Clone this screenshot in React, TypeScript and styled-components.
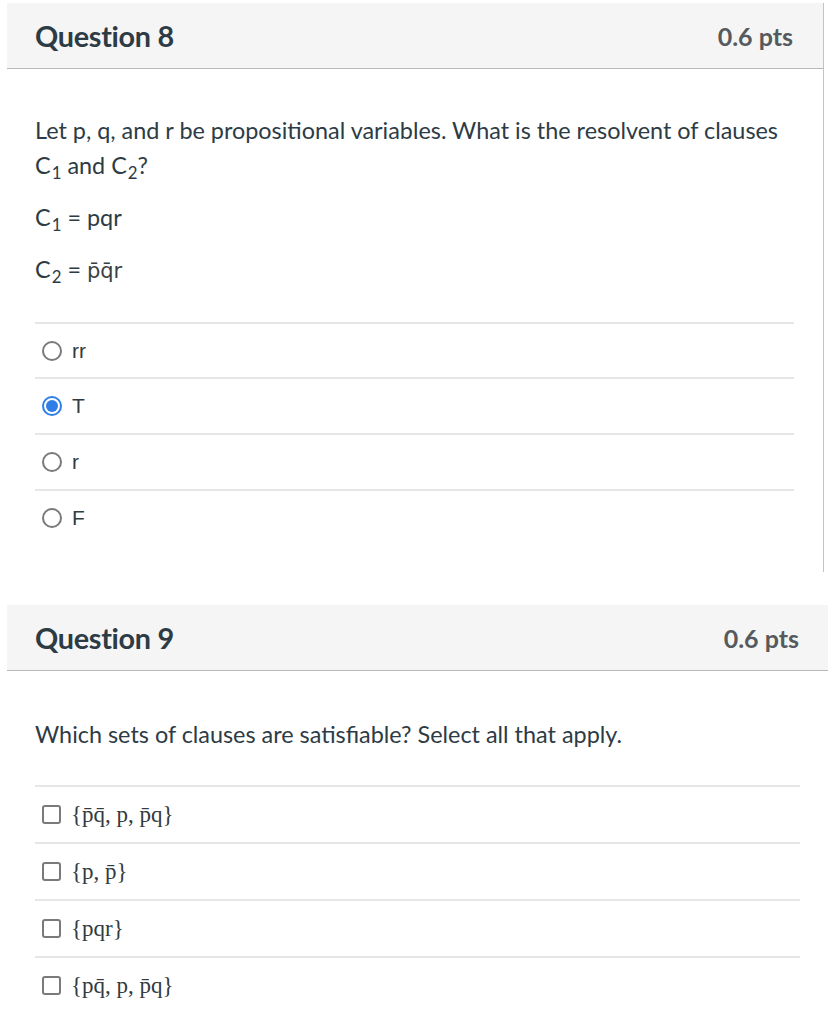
import React from 'react'
import styled, { createGlobalStyle } from 'styled-components'

const GlobalStyle = createGlobalStyle`
    body {
        margin: 0;
        background: #fff;
        font-family: Lato, 'Noto Sans', sans-serif;
        color: #2d3b45;
    }
`

const Page = styled.div`
    padding: 3px 0 0 7px;
    width: 837px;
    box-sizing: border-box;
`

const Card = styled.section<{ width: number; edge: boolean; gap?: number }>`
    width: ${(p) => p.width}px;
    box-sizing: border-box;
    border-right: ${(p) => (p.edge ? '1px solid #c4c4c4' : 'none')};
    margin-bottom: ${(p) => p.gap ?? 0}px;
`

const Header = styled.header<{ right: number }>`
    display: flex;
    align-items: center;
    justify-content: space-between;
    height: 65px;
    padding: 0 ${(p) => p.right}px 0 28px;
    background: #f5f5f5;
    border-bottom: 1px solid #b8b8b8;
`

const Title = styled.h2`
    margin: 0;
    font-size: 28.8px;
    font-weight: 700;
    color: #2d3b45;
    letter-spacing: -0.3px;
`

const Points = styled.div`
    font-size: 25px;
    font-weight: 700;
    color: #555a5e;
`

const Body = styled.div<{ top: number; right: number; bottom: number }>`
    padding: ${(p) => p.top}px ${(p) => p.right}px ${(p) => p.bottom}px 28px;
`

const Text = styled.p`
    margin: 0 0 17px;
    font-size: 23.4px;
    line-height: 35px;
    color: #2d3b45;
`

const Clause = styled.span`
    white-space: nowrap;
`

const Sub = styled.span`
    display: inline-block;
    font-size: 0.72em;
    line-height: 1;
    vertical-align: -0.3em;
    margin-left: 1px;
`

const Bar = styled.span`
    font-family: 'DejaVu Sans', sans-serif;
    font-size: 21px;
    color: #3a3f44;
`

const Answers = styled.div<{ top: number }>`
    margin-top: ${(p) => p.top}px;
`

const Row = styled.label<{ height: number; serif?: boolean }>`
    display: flex;
    align-items: center;
    gap: 10px;
    height: ${(p) => p.height}px;
    padding-left: 7px;
    border-top: 2px solid #e6e6e6;
    box-sizing: border-box;
    font-family: ${(p) =>
        p.serif ? "'Liberation Serif', 'DejaVu Serif', serif" : "'Liberation Sans', Arial, sans-serif"};
    font-size: ${(p) => (p.serif ? 23 : 21)}px;
    color: #333b40;
`

const Radio = styled.span<{ checked?: boolean }>`
    width: 20px;
    height: 20px;
    border-radius: 50%;
    box-sizing: border-box;
    border: 2px solid ${(p) => (p.checked ? '#2f7ee8' : '#7a7a7a')};
    display: flex;
    align-items: center;
    justify-content: center;
    flex-shrink: 0;

    &::after {
        content: '';
        display: ${(p) => (p.checked ? 'block' : 'none')};
        width: 12px;
        height: 12px;
        border-radius: 50%;
        background: #2f7ee8;
    }
`

const Box = styled.span`
    width: 19px;
    height: 19px;
    border-radius: 3px;
    box-sizing: border-box;
    border: 2px solid #7a7a7a;
    flex-shrink: 0;
`

const C = ({ n }: { n: number }) => (
    <Clause>
        C<Sub>{n}</Sub>
    </Clause>
)

const radios = [
    { label: 'rr', checked: false },
    { label: 'T', checked: true },
    { label: 'r', checked: false },
    { label: 'F', checked: false },
]

const boxes = ['{p̄q̄, p, p̄q}', '{p, p̄}', '{pqr}', '{pq̄, p, p̄q}']

export default function App() {
    return (
        <Page>
            <GlobalStyle />
            <Card width={817} edge gap={33}>
                <Header right={30}>
                    <Title>Question 8</Title>
                    <Points>0.6 pts</Points>
                </Header>
                <Body top={44} right={29} bottom={27}>
                    <Text>
                        <span>Let p, q, and r be propositional variables. What is the resolvent of clauses </span>
                        <C n={1} /> and <C n={2} />?
                    </Text>
                    <Text>
                        <C n={1} /> = pqr
                    </Text>
                    <Text>
                        <C n={2} /> = <Bar>p̄q̄r</Bar>
                    </Text>
                    <Answers top={33}>
                        {radios.map((r) => (
                            <Row key={r.label} height={r.label === 'rr' ? 55 : 56}>
                                <Radio checked={r.checked} />
                                {r.label}
                            </Row>
                        ))}
                    </Answers>
                </Body>
            </Card>
            <Card width={821} edge={false}>
                <Header right={29}>
                    <Title>Question 9</Title>
                    <Points>0.6 pts</Points>
                </Header>
                <Body top={46} right={28} bottom={20}>
                    <Text>Which sets of clauses are satisfiable? Select all that apply.</Text>
                    <Answers top={33}>
                        {boxes.map((b) => (
                            <Row key={b} height={57} serif>
                                <Box />
                                {b}
                            </Row>
                        ))}
                    </Answers>
                </Body>
            </Card>
        </Page>
    )
}
